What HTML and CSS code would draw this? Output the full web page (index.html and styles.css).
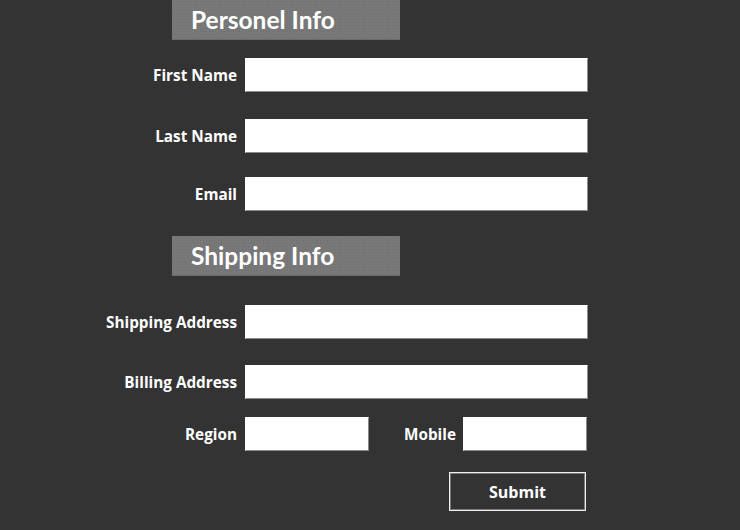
FILE: index.html
```html
<!DOCTYPE html>
<html lang="en">
<head>
    <meta charset="UTF-8">
    <title>Order Form</title>
    <link rel="stylesheet" href="styles.css">
</head>
<body>
    <form class="order-form">
        <h2 class="section-title">Personel Info</h2>
        <div class="row row-first">
            <label class="label" for="first">First Name</label>
            <input class="field" id="first" type="text">
        </div>
        <div class="row row-last">
            <label class="label" for="last">Last Name</label>
            <input class="field" id="last" type="text">
        </div>
        <div class="row row-email">
            <label class="label" for="email">Email</label>
            <input class="field" id="email" type="text">
        </div>

        <h2 class="section-title shipping">Shipping Info</h2>
        <div class="row row-ship">
            <label class="label" for="ship">Shipping Address</label>
            <input class="field" id="ship" type="text">
        </div>
        <div class="row row-bill">
            <label class="label" for="bill">Billing Address</label>
            <input class="field" id="bill" type="text">
        </div>
        <div class="row row-split">
            <label class="label" for="region">Region</label>
            <input class="field short" id="region" type="text">
            <label class="label inline" for="mobile">Mobile</label>
            <input class="field short" id="mobile" type="text">
        </div>
        <div class="actions">
            <button class="submit" type="button">Submit</button>
        </div>
    </form>
</body>
</html>
```

FILE: styles.css
```css
body {
    margin: 0;
    background-color: #333333;
    font-family: "Open Sans", "Noto Sans", sans-serif;
    color: #fff;
}

.order-form {
    width: 740px;
    height: 530px;
}

.section-title {
    margin: 0 0 0 172px;
    width: 228px;
    height: 40px;
    box-sizing: border-box;
    padding-left: 19px;
    background-color: #787878;
    background-image: radial-gradient(rgba(0, 0, 0, 0.08) 1px, transparent 1px);
    background-size: 3px 3px;
    border-bottom: 1px solid #6a6a6a;
    font-family: Lato, "Noto Sans", sans-serif;
    font-size: 24.5px;
    font-weight: bold;
    line-height: 40px;
}

.shipping {
    margin-top: 25px;
}

.row {
    display: flex;
    align-items: center;
    height: 34px;
}

.row-first { margin-top: 18px; }
.row-last { margin-top: 27px; }
.row-email { margin-top: 24px; }
.row-ship { margin-top: 29px; }
.row-bill { margin-top: 26px; }
.row-split { margin-top: 18px; }

.label {
    width: 237px;
    margin-right: 8px;
    text-align: right;
    font-size: 15.3px;
    font-weight: bold;
}

.label.inline {
    width: auto;
    margin-left: 35px;
    margin-right: 7px;
}

.field {
    width: 343px;
    height: 34px;
    box-sizing: border-box;
    margin: 0;
    border: 1px solid;
    border-color: #ffffff #8a8a8a #8a8a8a #ffffff;
    background-color: #fff;
    outline: none;
}

.field.short {
    width: 124px;
}

.actions {
    margin-top: 21px;
    padding-left: 449px;
}

.submit {
    width: 137px;
    height: 39px;
    background: transparent;
    border: 1px solid #f0f0f0;
    box-shadow: inset 0 0 0 1px #7a7a7a;
    color: #fff;
    font-family: "Open Sans", "Noto Sans", sans-serif;
    font-size: 16px;
    font-weight: bold;
    cursor: pointer;
}
```
